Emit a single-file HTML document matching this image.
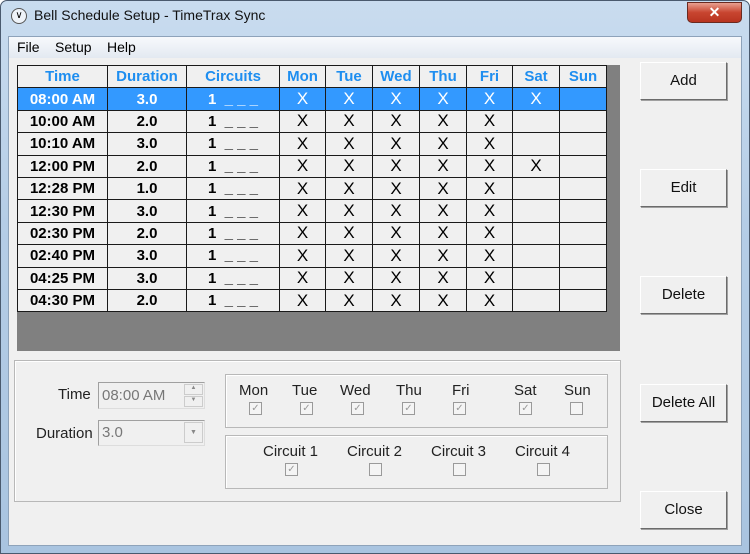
<!DOCTYPE html>
<html><head><style>
*{margin:0;padding:0;box-sizing:border-box}
body{width:750px;height:554px;overflow:hidden;background:#fff;font-family:"Liberation Sans",sans-serif;position:relative}
.a{position:absolute}
.frame{left:0;top:0;width:750px;height:554px;background:linear-gradient(#c9dcef,#b5cde6 40%,#a9c4e0);border:1px solid #4a5a6e;border-radius:7px 7px 0 0}
.client{left:8px;top:36px;width:734px;height:510px;background:#f0f0f0;border:1px solid #8ea3ba}
.menu{left:9px;top:37px;width:732px;height:21px;background:linear-gradient(#f7f9fc,#e3e9f1);font-size:14px}
.menu span{position:absolute;top:2px}
.grid{left:17px;top:65px;width:603px;height:286px;background:#808080}
table{position:absolute;left:17px;top:65px;border-collapse:collapse;font-family:"Liberation Sans",sans-serif;font-weight:bold;font-size:15px}
td{border:1.5px solid #1a1a1a;height:22.4px;text-align:center;background:#f0f0f0;padding:0}
td.x{font-weight:normal;font-size:17px}
tr.h td{color:#1e8ef0;font-size:15px}
tr.s td{background:#3399ff;color:#fff}
.btn{width:87px;height:38px;background:#f0f0f0;border:1px solid;border-color:#fff #6b6b6b #6b6b6b #fff;box-shadow:1px 1px 0 #a0a0a0;font-size:15px;text-align:center;line-height:36px;color:#111;left:640px}
.box{border:1px solid #b8b8b8;box-shadow:inset 1px 1px 0 #fff}
.lbl{font-size:15px;color:#222}
.cb{width:13px;height:13px;border:1px solid #9a9a9a;background:#f4f4f4;font-size:10px;color:#999;line-height:11px;text-align:center}
.inp{border:1px solid #a0a0a0;border-right-color:#ddd;border-bottom-color:#ddd;background:#f0f0f0;color:#777;font-size:15px;padding-left:3px}
</style></head><body>
<div class="a frame"></div>
<div class="a" style="left:11px;top:8px;width:16px;height:16px;border-radius:50%;border:1px solid #555;background:#eef3f9;font-size:10px;text-align:center;line-height:14px">&#8744;</div>
<div class="a" style="left:34px;top:7px;font-size:14px;color:#111">Bell Schedule Setup - TimeTrax Sync</div>
<div class="a" style="left:687px;top:2px;width:55px;height:21px;background:linear-gradient(#e8a090,#c84530 50%,#b83420);border:1px solid #6a2a20;border-radius:0 0 5px 5px;color:#fff;font-weight:bold;text-align:center;font-size:14px;line-height:19px">✕</div>
<div class="a client"></div>
<div class="a menu"><span style="left:8px">File</span><span style="left:46px">Setup</span><span style="left:98px">Help</span></div>
<div class="a grid"></div>
<table>
<colgroup><col style="width:90px"><col style="width:79px"><col style="width:93px"><col style="width:46px"><col style="width:47px"><col style="width:47px"><col style="width:47px"><col style="width:46px"><col style="width:47px"><col style="width:47px"></colgroup>
<tr class="h"><td>Time</td><td>Duration</td><td>Circuits</td><td>Mon</td><td>Tue</td><td>Wed</td><td>Thu</td><td>Fri</td><td>Sat</td><td>Sun</td></tr>
<tr class="s"><td>08:00 AM</td><td>3.0</td><td>1 &nbsp;_ _ _</td><td class="x">X</td><td class="x">X</td><td class="x">X</td><td class="x">X</td><td class="x">X</td><td class="x">X</td><td></td></tr>
<tr><td>10:00 AM</td><td>2.0</td><td>1 &nbsp;_ _ _</td><td class="x">X</td><td class="x">X</td><td class="x">X</td><td class="x">X</td><td class="x">X</td><td></td><td></td></tr>
<tr><td>10:10 AM</td><td>3.0</td><td>1 &nbsp;_ _ _</td><td class="x">X</td><td class="x">X</td><td class="x">X</td><td class="x">X</td><td class="x">X</td><td></td><td></td></tr>
<tr><td>12:00 PM</td><td>2.0</td><td>1 &nbsp;_ _ _</td><td class="x">X</td><td class="x">X</td><td class="x">X</td><td class="x">X</td><td class="x">X</td><td class="x">X</td><td></td></tr>
<tr><td>12:28 PM</td><td>1.0</td><td>1 &nbsp;_ _ _</td><td class="x">X</td><td class="x">X</td><td class="x">X</td><td class="x">X</td><td class="x">X</td><td></td><td></td></tr>
<tr><td>12:30 PM</td><td>3.0</td><td>1 &nbsp;_ _ _</td><td class="x">X</td><td class="x">X</td><td class="x">X</td><td class="x">X</td><td class="x">X</td><td></td><td></td></tr>
<tr><td>02:30 PM</td><td>2.0</td><td>1 &nbsp;_ _ _</td><td class="x">X</td><td class="x">X</td><td class="x">X</td><td class="x">X</td><td class="x">X</td><td></td><td></td></tr>
<tr><td>02:40 PM</td><td>3.0</td><td>1 &nbsp;_ _ _</td><td class="x">X</td><td class="x">X</td><td class="x">X</td><td class="x">X</td><td class="x">X</td><td></td><td></td></tr>
<tr><td>04:25 PM</td><td>3.0</td><td>1 &nbsp;_ _ _</td><td class="x">X</td><td class="x">X</td><td class="x">X</td><td class="x">X</td><td class="x">X</td><td></td><td></td></tr>
<tr><td>04:30 PM</td><td>2.0</td><td>1 &nbsp;_ _ _</td><td class="x">X</td><td class="x">X</td><td class="x">X</td><td class="x">X</td><td class="x">X</td><td></td><td></td></tr>
</table>
<div class="a btn" style="top:62px">Add</div>
<div class="a btn" style="top:169px">Edit</div>
<div class="a btn" style="top:276px">Delete</div>
<div class="a btn" style="top:384px">Delete All</div>
<div class="a btn" style="top:491px">Close</div>
<div class="a box" style="left:14px;top:360px;width:607px;height:142px"></div>
<div class="a lbl" style="left:58px;top:386px">Time</div>
<div class="a inp" style="left:98px;top:382px;width:107px;height:27px;line-height:25px">08:00 AM</div>
<div class="a" style="left:184px;top:384px;width:19px;height:11px;border:1px solid #ccc;font-size:6px;color:#888;text-align:center">▲</div>
<div class="a" style="left:184px;top:396px;width:19px;height:11px;border:1px solid #ccc;font-size:6px;color:#888;text-align:center">▼</div>
<div class="a lbl" style="left:36px;top:425px">Duration</div>
<div class="a inp" style="left:98px;top:420px;width:107px;height:26px;line-height:24px">3.0</div>
<div class="a" style="left:184px;top:422px;width:19px;height:21px;border:1px solid #ccc;font-size:7px;color:#888;text-align:center;line-height:19px">▼</div>
<div class="a box" style="left:225px;top:374px;width:383px;height:54px"></div>
<div class="a box" style="left:225px;top:435px;width:383px;height:54px"></div>
<div class="a lbl" style="left:239px;top:382px">Mon</div><div class="a cb" style="left:249px;top:402px">✓</div>
<div class="a lbl" style="left:292px;top:382px">Tue</div><div class="a cb" style="left:300px;top:402px">✓</div>
<div class="a lbl" style="left:340px;top:382px">Wed</div><div class="a cb" style="left:351px;top:402px">✓</div>
<div class="a lbl" style="left:396px;top:382px">Thu</div><div class="a cb" style="left:402px;top:402px">✓</div>
<div class="a lbl" style="left:452px;top:382px">Fri</div><div class="a cb" style="left:453px;top:402px">✓</div>
<div class="a lbl" style="left:514px;top:382px">Sat</div><div class="a cb" style="left:519px;top:402px">✓</div>
<div class="a lbl" style="left:564px;top:382px">Sun</div><div class="a cb" style="left:570px;top:402px"></div>
<div class="a lbl" style="left:263px;top:443px">Circuit 1</div><div class="a cb" style="left:285px;top:463px">✓</div>
<div class="a lbl" style="left:347px;top:443px">Circuit 2</div><div class="a cb" style="left:369px;top:463px"></div>
<div class="a lbl" style="left:431px;top:443px">Circuit 3</div><div class="a cb" style="left:453px;top:463px"></div>
<div class="a lbl" style="left:515px;top:443px">Circuit 4</div><div class="a cb" style="left:537px;top:463px"></div>
</body></html>
